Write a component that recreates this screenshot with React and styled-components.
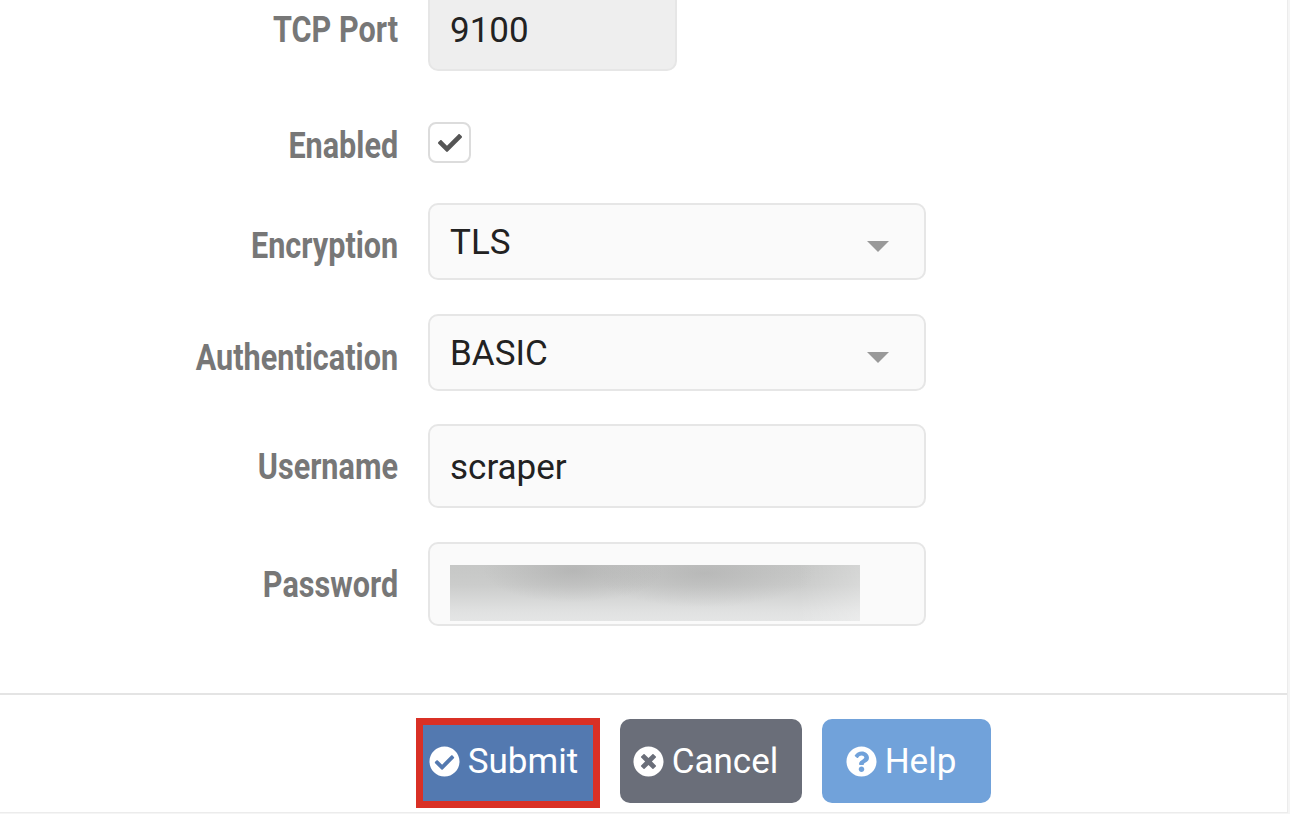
import React from 'react';
import styled, { createGlobalStyle } from 'styled-components';
import { FaCheck, FaCheckCircle, FaTimesCircle, FaQuestionCircle } from 'react-icons/fa';

const GlobalStyle = createGlobalStyle`
  html, body {
    margin: 0;
    height: 814px;
    overflow: hidden;
    background: #f5f5f5;
    font-family: Roboto, "Liberation Sans", sans-serif;
  }
`;

const Card = styled.div`
  width: 1287px;
  height: 812px;
  background: #fff;
  border-right: 1px solid #ececec;
  border-bottom: 1px solid #ececec;
  overflow: hidden;
`;

const Form = styled.form`
  display: flex;
  flex-direction: column;
  margin-top: -13px;
`;

const Row = styled.div`
  display: grid;
  grid-template-columns: 398px 1fr;
  column-gap: 30px;
  align-items: center;
  margin-bottom: ${(p) => p.$gap}px;
`;

const Label = styled.label`
  justify-self: end;
  padding-top: ${(p) => p.$nudge || 2}px;
  font-size: 36px;
  line-height: 30px;
  font-weight: 700;
  color: #777;
  white-space: nowrap;
  transform: scaleX(0.85);
  transform-origin: right center;
`;

const Field = styled.div`
  box-sizing: border-box;
  width: ${(p) => p.$width || 498}px;
  height: ${(p) => p.$height || 84}px;
  display: flex;
  align-items: center;
  justify-content: space-between;
  padding: 2px 35px 0 20px;
  background: ${(p) => (p.$disabled ? '#eeeeee' : '#fafafa')};
  border: 2px solid #e6e6e6;
  border-radius: 10px;
  font-size: 35px;
  color: #222;
`;

const Caret = styled.span`
  width: 0;
  height: 0;
  margin-top: 8px;
  border-left: 11px solid transparent;
  border-right: 11px solid transparent;
  border-top: 11px solid #999;
`;

const Check = styled.div`
  box-sizing: border-box;
  width: 43px;
  height: 41px;
  display: flex;
  align-items: center;
  justify-content: center;
  background: #fff;
  border: 2px solid #dcdcdc;
  border-radius: 8px;
  color: #555;
  font-size: 24px;
`;

const Blurred = styled.div`
  width: 410px;
  height: 56px;
  margin-top: 16px;
  background:
    radial-gradient(ellipse 90px 32px at 30% 10%, rgba(165, 165, 165, 0.5), transparent),
    radial-gradient(ellipse 110px 34px at 62% 15%, rgba(165, 165, 165, 0.45), transparent),
    linear-gradient(90deg, transparent 85%, rgba(255, 255, 255, 0.25) 100%),
    linear-gradient(180deg, #c6c7c6 0%, #cbcccb 35%, #e1e2e2 85%, #e4e5e5 100%);
`;

const Footer = styled.div`
  display: flex;
  gap: 20px;
  padding: 24px 0 0 418px;
  border-top: 2px solid #e4e4e4;
  margin-top: 67px;
`;

const Button = styled.button`
  position: relative;
  box-sizing: border-box;
  width: ${(p) => p.$width}px;
  height: 84px;
  display: flex;
  align-items: center;
  justify-content: center;
  gap: 8px;
  padding: 0 11px 0 0;
  border: none;
  border-radius: 10px;
  background: ${(p) => p.$bg};
  color: #fff;
  font-family: inherit;
  font-size: 35px;

  svg {
    font-size: 31px;
  }
`;

const RedBox = styled.span`
  position: absolute;
  top: -1px;
  left: -2px;
  right: 0;
  bottom: -5px;
  border: 7px solid #d93025;
`;

export default function App() {
  return (
    <>
      <GlobalStyle />
      <Card>
        <Form>
          <Row $gap={51}>
            <Label>TCP Port</Label>
            <Field $width={249} $disabled>9100</Field>
          </Row>
          <Row $gap={40}>
            <Label $nudge={6}>Enabled</Label>
            <Check><FaCheck /></Check>
          </Row>
          <Row $gap={34}>
            <Label $nudge={8}>Encryption</Label>
            <Field $height={77}>TLS<Caret /></Field>
          </Row>
          <Row $gap={33}>
            <Label $nudge={10}>Authentication</Label>
            <Field $height={77}>BASIC<Caret /></Field>
          </Row>
          <Row $gap={34}>
            <Label>Username</Label>
            <Field>scraper</Field>
          </Row>
          <Row $gap={0}>
            <Label>Password</Label>
            <Field><Blurred /></Field>
          </Row>
          <Footer>
            <Button type="button" $width={182} $bg="#5379b0">
              <FaCheckCircle /> Submit
              <RedBox />
            </Button>
            <Button type="button" $width={182} $bg="#6a6e79"><FaTimesCircle /> Cancel</Button>
            <Button type="button" $width={169} $bg="#71a2da"><FaQuestionCircle /> Help</Button>
          </Footer>
        </Form>
      </Card>
    </>
  );
}
